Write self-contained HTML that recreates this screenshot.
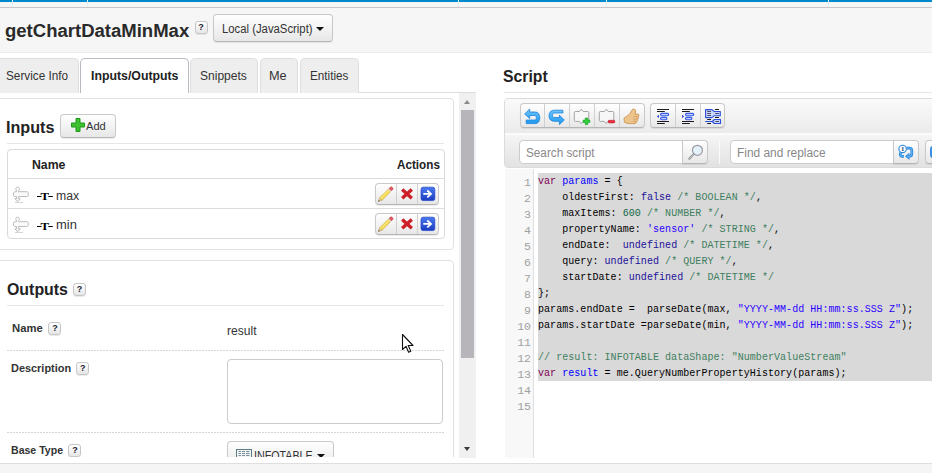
<!DOCTYPE html>
<html><head><meta charset="utf-8">
<style>
*{box-sizing:border-box;margin:0;padding:0}
html,body{width:932px;height:473px;overflow:hidden;background:#fff}
body{position:relative;font-family:"Liberation Sans",sans-serif;font-size:13px;color:#333}
.abs{position:absolute}
.t{position:absolute;white-space:nowrap;line-height:1}
#topbar{left:0;top:0;width:932px;height:2px;background:#0088cc}
.tdiv{position:absolute;top:0;width:1px;height:7px;background:#e8eef2}
#topgap{left:0;top:2px;width:932px;height:6px;background:#f6f6f6;border-bottom:1px solid #c6c6c6}
#hdr{left:0;top:8px;width:932px;height:45px;background:#f6f6f6;border-bottom:1px solid #ececec}
.btn{position:absolute;border:1px solid #c9c9c9;border-bottom-color:#b6b6b6;border-radius:4px;background:linear-gradient(#ffffff,#e7e7e7);box-shadow:0 1px 1px rgba(0,0,0,.08)}
.help{position:absolute;width:13px;height:13px;border:1px solid #c6c6c6;border-radius:3px;background:linear-gradient(#fff,#e6e6e6);font-size:9px;font-weight:bold;line-height:11px;text-align:center;color:#223;box-shadow:0 1px 0 rgba(0,0,0,.08)}
.tab{position:absolute;top:58px;height:35px;border:1px solid #dedede;border-bottom:none;border-radius:5px 5px 0 0;background:#eeeeee}
.tab.act{background:#fff;border-color:#bdb8c2}
.hr{position:absolute;height:1px;background:#e6e6e6}
.dash{position:absolute;height:1px;background:repeating-linear-gradient(90deg,#d6d6d6 0,#d6d6d6 2px,transparent 2px,transparent 3px)}
.panel{position:absolute;border:1px solid #e1e1e1;border-radius:4px;background:#fff}
.h{font-weight:bold;font-size:16px;color:#222}
.lbl{font-weight:bold;font-size:11px;color:#333}
pre,.code{font-family:"Liberation Mono",monospace}

#code{font-size:10px;line-height:16px;letter-spacing:0.05px}
#gut{font-size:11.5px;line-height:16px}
#code i,#gut i{font-style:normal}
#code b.k{color:#7f0055;font-weight:normal}
#code .d{color:#00f}#code .a{color:#219}#code .n{color:#164}#code .s{color:#2a00ff}#code .c{color:#3f7f5f}
</style></head><body>

<!-- top strip -->
<div id="topbar" class="abs"></div>
<div id="topgap" class="abs"></div>
<div class="tdiv" style="left:12px"></div><div class="tdiv" style="left:87px"></div><div class="tdiv" style="left:458px"></div><div class="tdiv" style="left:606px"></div><div class="tdiv" style="left:828px"></div>

<!-- header -->
<div id="hdr" class="abs"></div>
<div id="t0" class="t" style="left:4.6px;top:21.6px;font-size:18px;font-weight:bold;color:#2a2a2a;transform:scaleX(1.029);transform-origin:0 0">getChartDataMinMax</div>
<div class="help" style="left:194.5px;top:20.5px">?</div>
<div class="btn" style="left:213px;top:14px;width:120px;height:28px"></div>
<div id="t1" class="t" style="left:221.7px;top:23px;font-size:12px;color:#333;transform:scaleX(0.943);transform-origin:0 0">Local (JavaScript)</div>
<div class="abs" style="left:316px;top:27px;width:0;height:0;border-left:4px solid transparent;border-right:4px solid transparent;border-top:4px solid #111"></div>

<!-- tabs -->
<div class="tab" style="left:-3px;width:82px"></div>
<div class="tab act" style="left:80px;width:109px;top:58px"></div>
<div class="tab" style="left:190px;width:68px"></div>
<div class="tab" style="left:260px;width:38px"></div>
<div class="tab" style="left:300px;width:59px"></div>
<div id="t2" class="t" style="left:5.8px;top:70px;font-size:12px;color:#333;transform:scaleX(0.981);transform-origin:0 0">Service Info</div>
<div id="t3" class="t" style="left:90.8px;top:70px;font-size:12px;font-weight:bold;color:#222;transform:scaleX(1.025);transform-origin:0 0">Inputs/Outputs</div>
<div id="t4" class="t" style="left:199.8px;top:70px;font-size:12px;color:#333;transform:scaleX(1.004);transform-origin:0 0">Snippets</div>
<div id="t5" class="t" style="left:269.2px;top:70px;font-size:12px;color:#333;transform:scaleX(1.060);transform-origin:0 0">Me</div>
<div id="t6" class="t" style="left:309.6px;top:70px;font-size:12px;color:#333;transform:scaleX(0.978);transform-origin:0 0">Entities</div>

<!-- left scroll area -->
<div class="hr" style="left:358px;top:92px;width:118px;background:#dddddd"></div>
<div class="panel" style="left:-6px;top:98px;width:460px;height:152px"></div>
<div id="t7" class="t h" style="left:6.2px;top:120px;transform:scaleX(1.010);transform-origin:0 0">Inputs</div>
<div class="btn" style="left:60px;top:114px;width:56px;height:24px"></div>
<svg class="abs" style="left:71px;top:118px" width="14" height="14" viewBox="0 0 14 14"><path d="M5 0.5h4v4.5h4.5v4h-4.5v4.5h-4v-4.5h-4.5v-4h4.500z" fill="#3fc02f" stroke="#1f9a18" stroke-width="1"/></svg>
<div id="t8" class="t" style="left:85.8px;top:121px;font-size:11px;color:#333;transform:scaleX(1.010);transform-origin:0 0">Add</div>
<div class="hr" style="left:7px;top:143px;width:437px"></div>
<div class="panel" style="left:7px;top:149px;width:438px;height:90px;border-color:#dadada"></div>
<div class="hr" style="left:8px;top:178px;width:436px;background:#dcdcdc"></div>
<div class="hr" style="left:8px;top:208px;width:436px;background:#dcdcdc"></div>
<div id="t9" class="t lbl" style="left:31.8px;top:159px;font-size:12px;color:#222;transform:scaleX(1.023);transform-origin:0 0">Name</div>
<div id="t10" class="t lbl" style="left:397.0px;top:159px;font-size:12px;color:#222;transform:scaleX(0.975);transform-origin:0 0">Actions</div>

<!-- rows inserted here -->
<svg class="abs" style="left:12px;top:186px" width="18" height="18" viewBox="0 0 18 18"><path d="M5.6 1.2c1.1 0 1.9.8 1.9 1.8 0 .7-.4 1.2-.9 1.5v1.200h8.200c.9 0 1.500.6 1.500 1.400v2c0 .8-.6 1.400-1.500 1.400h-8.200v2.300h1.700l-2.700 3-2.700-3h1.700v-2.300h-1.600c-.9 0-1.500-.6-1.500-1.400v-2c0-.8.6-1.400 1.500-1.400h1.600v-1.200c-.5-.3-.9-.8-.9-1.500 0-1 .8-1.800 1.900-1.800z" fill="#fafafa" stroke="#bcbcbc" stroke-width="1"/><path d="M3 16.500h8" stroke="#d4d4d4" stroke-width="1"/></svg>
<svg class="abs" style="left:36px;top:188px" width="18" height="14" viewBox="0 0 18 14"><path d="M1 8.500h4.500M12.300 8.500h4.500" stroke="#000" stroke-width="1.100"/><text x="8.900" y="11.700" text-anchor="middle" font-family="Liberation Serif,serif" font-weight="bold" font-size="10.500" fill="#000" transform="translate(8.900 0) scale(1.220 1) translate(-8.900 0)">T</text></svg>
<div id="t11" class="t" style="left:55.8px;top:190px;font-size:12px;color:#333;transform:scaleX(1.021);transform-origin:0 0">max</div>
<div class="btn" style="left:375px;top:183px;width:64px;height:22px"></div>
<div class="abs" style="left:396px;top:184px;width:1px;height:20px;background:#cfcfcf"></div><div class="abs" style="left:417px;top:184px;width:1px;height:20px;background:#cfcfcf"></div>
<svg class="abs" style="left:377px;top:186px" width="17" height="17" viewBox="0 0 17 17"><g transform="translate(1.300 15.600) rotate(-45)"><path d="M0 0l3.600-1.700v3.400z" fill="#ecd4a8" stroke="#9a7a40" stroke-width=".4"/><path d="M0 0l1.400-.65v1.300z" fill="#111"/><rect x="3.600" y="-1.700" width="12" height="3.400" fill="#f6dc50" stroke="#c4a030" stroke-width=".5"/><path d="M3.600 -.5h12" stroke="#fbeea0" stroke-width=".9"/><rect x="15.600" y="-1.700" width="1.200" height="3.400" fill="#f2f2f2" stroke="#bbb" stroke-width=".3"/><path d="M16.800-1.700h2c.7 0 1.100.5 1.100 1.100v1.200c0 .6-.4 1.100-1.100 1.100h-2z" fill="#e45860" stroke="#b83840" stroke-width=".4"/></g></svg>
<svg class="abs" style="left:399px;top:186px" width="16" height="16" viewBox="0 0 16 16"><path d="M3.200 3.400l9.600 8.800M12.800 3.400l-9.600 8.800" stroke="#cc1f28" stroke-width="3.400" stroke-linecap="butt"/></svg>
<svg class="abs" style="left:420px;top:186px" width="16" height="16" viewBox="0 0 16 16"><defs><linearGradient id="bg178" x1="0" y1="0" x2="0" y2="1"><stop offset="0" stop-color="#4a78f0"/><stop offset="1" stop-color="#1a3cc0"/></linearGradient></defs><rect x="1" y="1.200" width="13.800" height="13.400" rx="2.200" fill="url(#bg178)" stroke="#2a4cc8" stroke-width=".8"/><path d="M3.300 7.900h7M7.300 4.500l3.700 3.400-3.700 3.400" fill="none" stroke="#fff" stroke-width="1.800"/></svg>
<svg class="abs" style="left:12px;top:216px" width="18" height="18" viewBox="0 0 18 18"><path d="M5.6 1.2c1.1 0 1.9.8 1.9 1.8 0 .7-.4 1.2-.9 1.5v1.200h8.200c.9 0 1.500.6 1.500 1.400v2c0 .8-.6 1.400-1.500 1.400h-8.200v2.300h1.700l-2.700 3-2.700-3h1.700v-2.300h-1.600c-.9 0-1.500-.6-1.500-1.400v-2c0-.8.6-1.400 1.500-1.400h1.600v-1.200c-.5-.3-.9-.8-.9-1.500 0-1 .8-1.800 1.900-1.800z" fill="#fafafa" stroke="#bcbcbc" stroke-width="1"/><path d="M3 16.500h8" stroke="#d4d4d4" stroke-width="1"/></svg>
<svg class="abs" style="left:36px;top:218px" width="18" height="14" viewBox="0 0 18 14"><path d="M1 8.500h4.500M12.300 8.500h4.500" stroke="#000" stroke-width="1.100"/><text x="8.900" y="11.700" text-anchor="middle" font-family="Liberation Serif,serif" font-weight="bold" font-size="10.500" fill="#000" transform="translate(8.900 0) scale(1.220 1) translate(-8.900 0)">T</text></svg>
<div id="t12" class="t" style="left:55.7px;top:219px;font-size:12px;color:#333;transform:scaleX(1.078);transform-origin:0 0">min</div>
<div class="btn" style="left:375px;top:213px;width:64px;height:22px"></div>
<div class="abs" style="left:396px;top:214px;width:1px;height:20px;background:#cfcfcf"></div><div class="abs" style="left:417px;top:214px;width:1px;height:20px;background:#cfcfcf"></div>
<svg class="abs" style="left:377px;top:216px" width="17" height="17" viewBox="0 0 17 17"><g transform="translate(1.300 15.600) rotate(-45)"><path d="M0 0l3.600-1.700v3.400z" fill="#ecd4a8" stroke="#9a7a40" stroke-width=".4"/><path d="M0 0l1.400-.65v1.300z" fill="#111"/><rect x="3.600" y="-1.700" width="12" height="3.400" fill="#f6dc50" stroke="#c4a030" stroke-width=".5"/><path d="M3.600 -.5h12" stroke="#fbeea0" stroke-width=".9"/><rect x="15.600" y="-1.700" width="1.200" height="3.400" fill="#f2f2f2" stroke="#bbb" stroke-width=".3"/><path d="M16.800-1.700h2c.7 0 1.100.5 1.100 1.100v1.200c0 .6-.4 1.100-1.100 1.100h-2z" fill="#e45860" stroke="#b83840" stroke-width=".4"/></g></svg>
<svg class="abs" style="left:399px;top:216px" width="16" height="16" viewBox="0 0 16 16"><path d="M3.200 3.400l9.600 8.800M12.800 3.400l-9.600 8.800" stroke="#cc1f28" stroke-width="3.400" stroke-linecap="butt"/></svg>
<svg class="abs" style="left:420px;top:216px" width="16" height="16" viewBox="0 0 16 16"><defs><linearGradient id="bg208" x1="0" y1="0" x2="0" y2="1"><stop offset="0" stop-color="#4a78f0"/><stop offset="1" stop-color="#1a3cc0"/></linearGradient></defs><rect x="1" y="1.200" width="13.800" height="13.400" rx="2.200" fill="url(#bg208)" stroke="#2a4cc8" stroke-width=".8"/><path d="M3.300 7.900h7M7.300 4.500l3.700 3.400-3.700 3.400" fill="none" stroke="#fff" stroke-width="1.800"/></svg>


<!-- outputs -->
<div class="panel" style="left:-6px;top:260px;width:460px;height:240px"></div>
<div id="t13" class="t h" style="left:7.2px;top:282px;transform:scaleX(0.994);transform-origin:0 0">Outputs</div>
<div class="help" style="left:73px;top:283px">?</div>
<div class="hr" style="left:7px;top:305px;width:437px"></div>
<div id="t14" class="t lbl" style="left:12.1px;top:323px;transform:scaleX(1.024);transform-origin:0 0">Name</div>
<div class="help" style="left:48.4px;top:321.5px">?</div>
<div id="t15" class="t" style="left:226.6px;top:325px;font-size:12px;color:#333;transform:scaleX(1.006);transform-origin:0 0">result</div>
<div class="dash" style="left:7px;top:350px;width:437px"></div>
<div id="t16" class="t lbl" style="left:11.2px;top:363px;transform:scaleX(0.993);transform-origin:0 0">Description</div>
<div class="help" style="left:76.2px;top:361.5px">?</div>
<div class="abs" style="left:227px;top:359px;width:216px;height:65px;border:1px solid #ccc;border-radius:4px;background:#fff"></div>
<div class="dash" style="left:7px;top:432px;width:437px"></div>
<div id="t17" class="t lbl" style="left:11.2px;top:445px;transform:scaleX(0.960);transform-origin:0 0">Base Type</div>
<div class="help" style="left:68.4px;top:443.5px">?</div>
<div class="btn" style="left:227px;top:441px;width:107px;height:27px"></div>
<svg class="abs" style="left:236px;top:449px" width="16" height="14" viewBox="0 0 16 14"><rect x=".5" y=".5" width="15" height="12" fill="#f2f4f6" stroke="#5c7c84" stroke-width="1"/><path d="M2.500 2.500h11M2.500 4.500h11M2.500 6.500h11M2.500 8.500h11M2.500 10.500h11" stroke="#7a8e9c" stroke-width="1"/><path d="M5.500 2v9.500M9.500 2v9.500" stroke="#f2f4f6" stroke-width="1"/></svg>

<div id="t18" class="t" style="left:254.1px;top:450px;font-size:12px;color:#333;transform:scaleX(0.891);transform-origin:0 0">INFOTABLE</div>
<div class="abs" style="left:317px;top:454px;width:0;height:0;border-left:4px solid transparent;border-right:4px solid transparent;border-top:4px solid #111"></div>
<!-- mask below scroll area -->
<div class="abs" style="left:0;top:457px;width:932px;height:16px;background:#fff"></div>

<!-- scrollbar -->
<div class="abs" style="left:459px;top:93px;width:17px;height:365px;background:#f0f0f0"></div>
<div class="abs" style="left:461px;top:110px;width:13px;height:248px;background:#b7b5ba"></div>
<div class="abs" style="left:464px;top:100px;width:0;height:0;border-left:3.5px solid transparent;border-right:3.5px solid transparent;border-bottom:4px solid #8a8a8a"></div>
<div class="abs" style="left:464px;top:447px;width:0;height:0;border-left:3.5px solid transparent;border-right:3.5px solid transparent;border-top:4px solid #3a3a3a"></div>

<!-- bottom bar -->
<div class="abs" style="left:0;top:463px;width:932px;height:10px;background:#f5f5f5;border-top:1px solid #dedede"></div>

<!-- cursor -->
<svg class="abs" style="left:401px;top:333px" width="14" height="21" viewBox="0 0 14 21"><path d="M1.5 1.5v15l3.5-3.2 2.6 6 2.2-1-2.6-5.8h4.800z" fill="#fff" stroke="#111" stroke-width="1.1" stroke-linejoin="round"/></svg>

<!-- right: script -->
<div id="t19" class="t h" style="left:503.2px;top:69px;transform:scaleX(0.985);transform-origin:0 0">Script</div>
<div class="hr" style="left:504px;top:92px;width:428px"></div>
<div class="abs" id="tb" style="left:504px;top:98px;width:440px;height:70px;border:1px solid #dcdcdc;border-radius:4px;background:#f3f3f3"></div>
<div class="abs" style="left:505px;top:99px;width:427px;height:34px;background:linear-gradient(#fafafa,#ebebeb);border-radius:3px 0 0 0"></div>
<div class="abs" style="left:505px;top:133px;width:427px;height:2px;background:#fbfbfb"></div>
<div class="abs" style="left:505px;top:135px;width:427px;height:32px;background:linear-gradient(#f5f5f5,#e2e2e2);border-radius:0 0 0 3px"></div>
<div class="btn" style="left:520px;top:103px;width:125px;height:25px"></div>
<div class="abs" style="left:544px;top:104px;width:1px;height:23px;background:#cfcfcf"></div><div class="abs" style="left:569px;top:104px;width:1px;height:23px;background:#cfcfcf"></div><div class="abs" style="left:594px;top:104px;width:1px;height:23px;background:#cfcfcf"></div><div class="abs" style="left:619px;top:104px;width:1px;height:23px;background:#cfcfcf"></div>
<div class="btn" style="left:650px;top:103px;width:75px;height:25px"></div>
<div class="abs" style="left:675px;top:104px;width:1px;height:23px;background:#cfcfcf"></div><div class="abs" style="left:700px;top:104px;width:1px;height:23px;background:#cfcfcf"></div>
<div class="abs" style="left:519px;top:140px;width:165px;height:24px;border:1px solid #ccc;border-radius:4px 0 0 4px;background:#fff"></div>
<div id="t20" class="t" style="left:525.8px;top:147px;font-size:12px;color:#888;transform:scaleX(0.978);transform-origin:0 0">Search script</div>
<div class="btn" style="left:682px;top:140px;width:26px;height:24px;border-radius:0 4px 4px 0"></div>
<svg class="abs" style="left:687px;top:143px" width="18" height="18" viewBox="0 0 18 18"><circle cx="10.400" cy="7.300" r="5" fill="#e4f1fb" stroke="#9a9aa2" stroke-width="1.200"/><path d="M6.900 10.900l-4.600 4.800" stroke="#8c8c94" stroke-width="2" stroke-linecap="round"/><path d="M6.900 10.900l-4.300 4.500" stroke="#f0f0f0" stroke-width=".6" stroke-linecap="round"/></svg>
<div class="abs" style="left:719px;top:140px;width:1px;height:24px;background:#fafafa"></div>
<div class="abs" style="left:730px;top:140px;width:164px;height:24px;border:1px solid #ccc;border-radius:4px 0 0 4px;background:#fff"></div>
<div id="t21" class="t" style="left:736.6px;top:147px;font-size:12px;color:#888;transform:scaleX(0.992);transform-origin:0 0">Find and replace</div>
<div class="btn" style="left:893px;top:140px;width:26px;height:24px;border-radius:0 4px 4px 0"></div>
<div class="btn" style="left:925px;top:140px;width:26px;height:24px"></div>
<div class="abs" style="left:930px;top:146px;width:6px;height:12px;border-radius:3px 0 0 3px;background:#3c8ce8"></div>


<svg class="abs" style="left:505px;top:99px" width="427" height="69" viewBox="505 99 427 69"><defs><linearGradient id="ub" x1="0" y1="0" x2="0" y2="1"><stop offset="0" stop-color="#70c4fa"/><stop offset="1" stop-color="#1c98f0"/></linearGradient></defs><g transform="translate(524 108)"><path d="M.6 5.900L5.700 1.100V4H11C14 4 15.800 6 15.800 9.800C15.800 13.500 14 15.600 11 15.600H2.200V12H10.800C11.800 12 12.300 11.200 12.300 9.800C12.300 8.300 11.800 7.500 10.800 7.500H5.700V10.500Z" fill="url(#ub)" stroke="#1d84da" stroke-width=".8" stroke-linejoin="round"/></g><g transform="translate(548 108)"><path d="M14.900 2.200H6.500C3 2.200 1 4.200 1 7.700C1 11.300 3 13.300 6.500 13.300H11.400V16.600L16.300 12.100L11.400 7.100V9.500H6.700C5.200 9.500 4.500 8.900 4.500 7.400C4.500 5.900 5.200 5 6.700 5H14.900Z" fill="url(#ub)" stroke="#1d84da" stroke-width=".8" stroke-linejoin="round"/></g><g transform="translate(573 108)"><path d="M2.300 3.500H6.400L8.300 1.200L10.200 3.500H14.800C15.400 3.500 15.800 3.900 15.800 4.500V12.400C15.800 13 15.400 13.400 14.800 13.400H10.100L8.300 15.600L6.500 13.400H2.300C1.700 13.400 1.300 13 1.300 12.400V4.500C1.300 3.900 1.700 3.500 2.300 3.500Z" fill="#f7f7f7" stroke="#a4a4aa" stroke-width="1"/><path d="M12.300 10h2.400v2.100h2.100v2.400h-2.100v2.100h-2.400v-2.100h-2.100v-2.400h2.100z" fill="#2fd03c" stroke="#1aa428" stroke-width=".7" stroke-linejoin="round"/></g><g transform="translate(598 108)"><path d="M2.300 3.500H6.400L8.300 1.200L10.200 3.500H14.800C15.400 3.500 15.800 3.900 15.800 4.500V12.400C15.800 13 15.400 13.400 14.800 13.400H10.100L8.300 15.600L6.500 13.400H2.300C1.700 13.400 1.300 13 1.300 12.400V4.500C1.300 3.900 1.700 3.500 2.300 3.500Z" fill="#f7f7f7" stroke="#a4a4aa" stroke-width="1"/><rect x="10.100" y="12.300" width="6.700" height="2.600" rx="1" fill="#ea3040" stroke="#c01c2c" stroke-width=".6"/></g><g transform="translate(623 108)"><path d="M1 10.200L4.800 7.600C6.600 6.200 7.800 4.400 8.600 2.600C9.100 1.500 9.900 1 10.900 1.100C12.300 1.300 12.900 2.300 12.700 3.700L12.100 6.100H14.700C15.700 6.100 16.100 6.700 16 7.500C15.900 8.200 15.600 8.600 15.100 8.800C15.500 9.200 15.600 9.800 15.400 10.300C15.200 10.800 14.900 11.100 14.500 11.200C14.800 11.700 14.700 12.300 14.500 12.700C14.300 13.100 14 13.400 13.600 13.500C13.700 14 13.600 14.400 13.300 14.800C12.800 15.400 12 15.600 11 15.600H6.500C4.500 15.600 2.800 15.100 1.300 14.200Z" fill="#edc48c" stroke="#c68c48" stroke-width=".8" stroke-linejoin="round"/><path d="M10.500 8.600h4.200M10.300 11h3.900M10.100 13.300h3.200" stroke="#c68c48" stroke-width=".6" fill="none"/></g><path d="M657 109.500h12M657 111.500h7.800M657 121.500h12M657 123.500h7.800" stroke="#1c1c1c" stroke-width="1"/><rect x="660.5" y="113.400" width="8.200" height="2.300" rx="1.150" fill="#c4d2ff" stroke="#3a5ce6" stroke-width="1.100"/><rect x="660.5" y="117.400" width="6.400" height="2.300" rx="1.150" fill="#c4d2ff" stroke="#3a5ce6" stroke-width="1.100"/><path d="M656.9 116.400l2.100-1.700v3.400z" fill="#2a46cc"/><path d="M682 109.500h12M682 111.500h7.800M682 121.500h12M682 123.500h7.800" stroke="#1c1c1c" stroke-width="1"/><rect x="685.5" y="113.400" width="8.200" height="2.300" rx="1.150" fill="#c4d2ff" stroke="#3a5ce6" stroke-width="1.100"/><rect x="685.5" y="117.400" width="6.400" height="2.300" rx="1.150" fill="#c4d2ff" stroke="#3a5ce6" stroke-width="1.100"/><path d="M682 114.700v3.400l2.200-1.700z" fill="#2a46cc"/><path d="M705.600 109.600h6.400l2.300 1.900h6v4.200h-6l-2.300 1.900h-6.400z" fill="#c8d6ff" stroke="#2d50dc" stroke-width="1.100" stroke-linejoin="round"/><path d="M707.200 111.500h3.800M707.200 113.500h3.800M707.200 115.500h3.800M715.200 113.500h3.800" stroke="#4a4a6a" stroke-width="1"/><path d="M715 109.500h4M715 117.500h4M707.200 119.500h3.800M707.200 123.500h3.800" stroke="#1c1c1c" stroke-width="1"/><path d="M705.200 121.500h7.500" stroke="#2d50dc" stroke-width="1.100"/><path d="M712.400 121.500l1.900-2h6.200v4h-6.200z" fill="#c8d6ff" stroke="#2d50dc" stroke-width="1.100" stroke-linejoin="round"/><path d="M715.400 121.500h3.600" stroke="#4a4a6a" stroke-width="1"/><path d="M906.300 148.100H909.300Q911.800 148.100 911.800 150.600V153.800Q911.800 156.300 909.300 156.300H908.600M900.300 152.400V154.300Q900.300 156.300 902.300 156.300H903.900" fill="none" stroke="#2680d8" stroke-width="2.700"/><path d="M905 156.300L909.400 152.700V159.900Z" fill="#2680d8"/><path d="M906.300 148.100H909.300Q911.800 148.100 911.800 150.600V153.800Q911.800 156.300 909.300 156.300H908.600M900.300 152.400V154.300Q900.300 156.300 902.300 156.300H903.900" fill="none" stroke="#58b0f6" stroke-width="1.300"/><path d="M906.300 156.300L908.800 154.200V158.400Z" fill="#58b0f6"/><circle cx="902.600" cy="148.900" r="3.700" fill="#fff" stroke="#2a8ae2" stroke-width="1.100"/><text x="902.600" y="151.300" text-anchor="middle" font-family="Liberation Serif,serif" font-weight="bold" font-size="6.800" fill="#1a3a7c">1</text></svg>

<!-- code editor -->
<div class="abs" style="left:505px;top:169px;width:29px;height:289px;background:#f8f8f8;border-right:1px solid #dfdfdf"></div>
<div class="abs" style="left:538px;top:173px;width:394px;height:208px;background:#d9d9d9"></div>
<div class="abs code" id="gut" style="left:505px;top:175px;width:26px;text-align:right;color:#a0a0a0"><div>1</div><div>2</div><div>3</div><div>4</div><div>5</div><div>6</div><div>7</div><div>8</div><div>9</div><div>10</div><div>11</div><div>12</div><div>13</div><div>14</div><div>15</div></div>
<pre class="abs" id="code" style="left:538px;top:174px;color:#000"><b class="k">var</b> <i class="d">params</i> = {
    oldestFirst: <i class="a">false</i> <i class="c">/* BOOLEAN */</i>,
    maxItems: <i class="n">600</i> <i class="c">/* NUMBER */</i>,
    propertyName: <i class="s">'sensor'</i> <i class="c">/* STRING */</i>,
    endDate:  <i class="a">undefined</i> <i class="c">/* DATETIME */</i>,
    query: <i class="a">undefined</i> <i class="c">/* QUERY */</i>,
    startDate: <i class="a">undefined</i> <i class="c">/* DATETIME */</i>
};
params.endDate =  parseDate(max, <i class="s">"YYYY-MM-dd HH:mm:ss.SSS Z"</i>);
params.startDate =parseDate(min, <i class="s">"YYYY-MM-dd HH:mm:ss.SSS Z"</i>);

<i class="c">// result: INFOTABLE dataShape: "NumberValueStream"</i>
<b class="k">var</b> <i class="d">result</i> = me.QueryNumberPropertyHistory(params);

</pre>


</body></html>
